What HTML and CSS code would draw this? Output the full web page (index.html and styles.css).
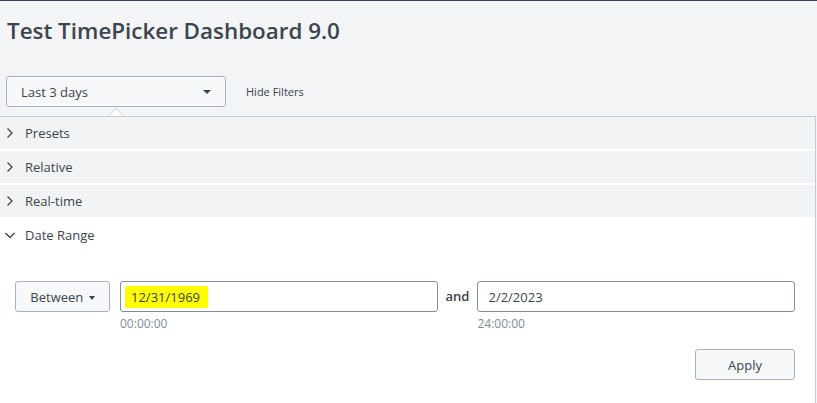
FILE: index.html
```html
<!DOCTYPE html>
<html lang="en">
<head>
    <meta charset="UTF-8">
    <meta name="viewport" content="width=device-width, initial-scale=1.0">
    <title>Test TimePicker Dashboard 9.0</title>
    <link rel="stylesheet" href="styles.css">
</head>
<body>
    <div class="dashboard">
        <h1 class="dash-title">Test TimePicker Dashboard 9.0</h1>

        <div class="filter-bar">
            <button class="time-select" type="button">
                <span>Last 3 days</span>
                <span class="caret"></span>
            </button>
            <a class="hide-filters" href="#">Hide Filters</a>
        </div>

        <div class="popover">
            <span class="popover-arrow"></span>

            <div class="section">
                <div class="section-head">
                    <svg class="chevron" width="12" height="12" viewBox="0 0 12 12"><path d="M3.5 1.5 L8 6 L3.5 10.5" /></svg>
                    Presets
                </div>
            </div>
            <div class="section">
                <div class="section-head">
                    <svg class="chevron" width="12" height="12" viewBox="0 0 12 12"><path d="M3.5 1.5 L8 6 L3.5 10.5" /></svg>
                    Relative
                </div>
            </div>
            <div class="section">
                <div class="section-head">
                    <svg class="chevron" width="12" height="12" viewBox="0 0 12 12"><path d="M3.5 1.5 L8 6 L3.5 10.5" /></svg>
                    Real-time
                </div>
            </div>
            <div class="section open">
                <div class="section-head">
                    <svg class="chevron" width="12" height="12" viewBox="0 0 12 12"><path d="M1.5 4 L6 8.5 L10.5 4" /></svg>
                    Date Range
                </div>
                <div class="section-body">
                    <div class="range-row">
                        <button class="between-btn" type="button">Between <span class="caret small"></span></button>
                        <div class="field">
                            <div class="date-input"><span class="marked">12/31/1969</span></div>
                            <div class="hint">00:00:00</div>
                        </div>
                        <span class="and">and</span>
                        <div class="field">
                            <div class="date-input">2/2/2023</div>
                            <div class="hint">24:00:00</div>
                        </div>
                    </div>
                    <div class="actions">
                        <button class="apply-btn" type="button">Apply</button>
                    </div>
                </div>
            </div>
        </div>
    </div>
</body>
</html>
```

FILE: styles.css
```css
* {
    box-sizing: border-box;
}

body {
    margin: 0;
    background: #f2f4f6;
    border-top: 1px solid #3c444d;
    font-family: "Open Sans", "Liberation Sans", Arial, sans-serif;
    color: #3c444d;
}

.dashboard {
    padding: 0;
}

.dash-title {
    margin: 0;
    padding: 15px 0 0 7px;
    font-size: 22.4px;
    font-weight: 600;
    line-height: 30px;
    color: #3c444d;
}

.filter-bar {
    display: flex;
    align-items: center;
    margin-top: 30px;
    padding-left: 6px;
    height: 31px;
}

.time-select {
    display: flex;
    align-items: center;
    justify-content: space-between;
    width: 220px;
    height: 31px;
    padding: 0 14px;
    background: #f7f8fa;
    border: 1px solid #a9b2bc;
    border-radius: 3px;
    font-family: inherit;
    font-size: 13px;
    color: #3c444d;
}

.caret {
    display: inline-block;
    width: 0;
    height: 0;
    border-left: 4px solid transparent;
    border-right: 4px solid transparent;
    border-top: 4px solid #3c444d;
}

.caret.small {
    border-left-width: 3.5px;
    border-right-width: 3.5px;
    margin-left: 2px;
    vertical-align: 2px;
}

.hide-filters {
    margin-left: 20px;
    font-size: 11px;
    color: #3c444d;
    text-decoration: none;
}

.popover {
    position: relative;
    margin-top: 9px;
    width: 816px;
    background: #ffffff;
    border-top: 1px solid #c3cbd4;
    border-right: 1px solid #c3cbd4;
    padding-bottom: 30px;
}

.popover-arrow {
    position: absolute;
    top: -9px;
    left: 108px;
    width: 0;
    height: 0;
    border-left: 8px solid transparent;
    border-right: 8px solid transparent;
    border-bottom: 8px solid #c3cbd4;
}

.popover-arrow:after {
    content: "";
    position: absolute;
    top: 1px;
    left: -7px;
    border-left: 7px solid transparent;
    border-right: 7px solid transparent;
    border-bottom: 7px solid #ffffff;
}

.section {
    margin-bottom: 2px;
}

.section-head {
    display: flex;
    align-items: center;
    height: 32px;
    padding-left: 4px;
    background: #f1f3f5;
    font-size: 13px;
    color: #3c444d;
}

.chevron {
    margin-right: 9px;
    fill: none;
    stroke: #3c444d;
    stroke-width: 1.3;
}

.section.open .section-head {
    background: #ffffff;
}

.section-body {
    padding: 30px 20px 0 15px;
}

.range-row {
    display: flex;
    align-items: flex-start;
}

.between-btn {
    width: 95px;
    height: 31px;
    margin-right: 10px;
    background: #f7f8fa;
    border: 1px solid #a9b2bc;
    border-radius: 3px;
    font-family: inherit;
    font-size: 13px;
    color: #3c444d;
}

.field {
    flex: 1;
}

.date-input {
    height: 31px;
    padding: 0 10px;
    display: flex;
    align-items: center;
    border: 1px solid #818d99;
    border-radius: 3px;
    background: #ffffff;
    font-size: 13px;
    color: #3c444d;
}

.marked {
    background: #ffff00;
    margin-left: -6px;
    padding: 2px 8px 2px 6px;
    border-radius: 2px;
}

.hint {
    margin-top: 3px;
    font-size: 12px;
    color: #818d99;
}

.and {
    margin: 0 8px;
    line-height: 31px;
    font-size: 13px;
    font-weight: 600;
    color: #3c444d;
}

.actions {
    display: flex;
    justify-content: flex-end;
    margin-top: 17px;
}

.apply-btn {
    width: 100px;
    height: 31px;
    background: #f7f8fa;
    border: 1px solid #a9b2bc;
    border-radius: 3px;
    font-family: inherit;
    font-size: 13px;
    color: #3c444d;
}
```
